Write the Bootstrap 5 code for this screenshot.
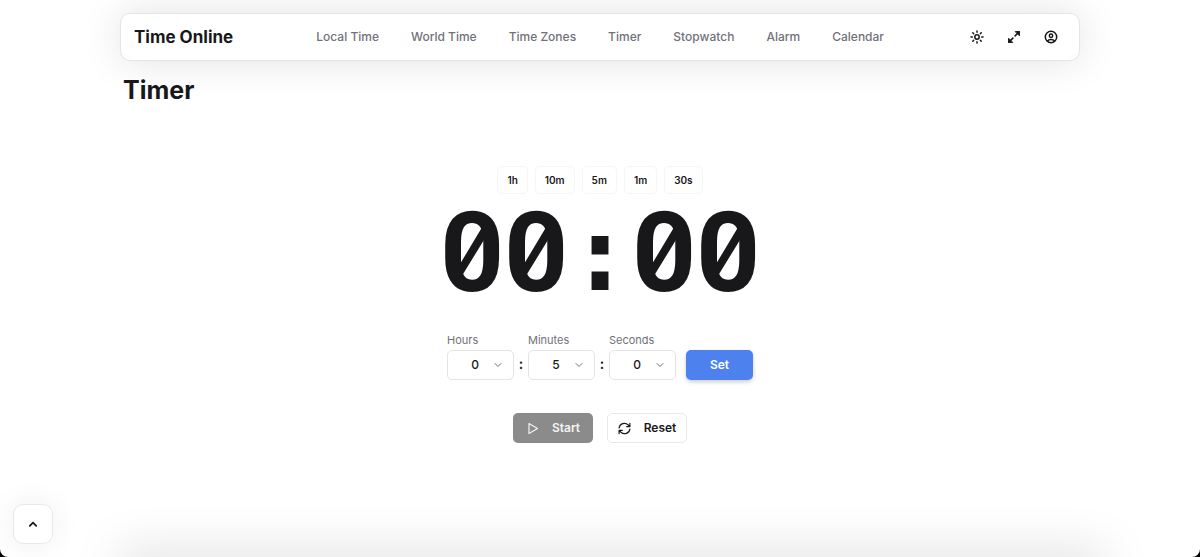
<!DOCTYPE html>
<html lang="en">
<head>
<meta charset="utf-8">
<meta name="viewport" content="width=device-width, initial-scale=1">
<title>Timer - Time Online</title>
<link href="https://cdn.jsdelivr.net/npm/bootstrap@5.3.0/dist/css/bootstrap.min.css" rel="stylesheet">
<style>
html { background: #000; }
body { font-family: Inter, "Liberation Sans", sans-serif; font-size: 12px; color: #18181a; background: #000; }
.app-window { background: #fff; border-radius: 0 0 8px 8px; overflow: hidden; padding-top: 13px; }
.app-column { width: 80%; }
.app-header { height: 48px; background: #fff; border: 1px solid #e5e5e7; border-radius: 10px; box-shadow: 0 0 40px rgba(0,0,0,.12); padding: 0 10px 0 13px; }
.brand { font-size: 17px; line-height: 24px; font-weight: 700; color: #18181a; }
.site-nav { gap: 32px; }
.site-link { font-weight: 500; color: #71717a; }
.tools { gap: 1px; }
.tool-btn { width: 36px; height: 36px; color: #18181a; }
.title { font-size: 25px; font-weight: 700; line-height: 30px; margin: 14px 3px 0; }
.presets { gap: 7px; margin-top: 61px; }
.preset { height: 28px; padding: 0 9px; font-size: 10px; font-weight: 600; line-height: 12px; background: #fff; color: #18181a; border: 1px solid #f6f6f7; border-radius: 5px; }
.clock { font: 700 112px/112px Roboto, sans-serif; color: #18181a; margin-top: 3px; }
.digit, .separator { width: 64px; text-align: center; }
.digit { position: relative; }
.digit::after { content: ""; position: absolute; left: 17px; top: 32px; width: 30px; height: 50px; background: currentColor; clip-path: polygon(0 40px, 24px 0, 30px 0, 30px 6px, 3px 50px, 0 50px); }
.separator { font: 700 104px/114px "DejaVu Sans Mono", monospace; }
.duration { gap: 4px; margin-top: 22px; }
.field-label { font-size: 11px; line-height: 14px; color: #71717a; margin-bottom: 3px; }
.duration-select { width: 67px; height: 30px; padding: 0 11px 0 0; text-align: center; text-align-last: center; font-size: 12px; font-weight: 500; color: #18181a; background: #fff; border: 1px solid #e4e4e7; border-radius: 5px; appearance: none; }
.chevron { position: absolute; right: 12px; bottom: 10px; pointer-events: none; color: #71717a; }
.colon { width: 6px; height: 30px; font-size: 14px; line-height: 28px; font-weight: 600; text-align: center; }
.action { height: 30px; padding: 0; font-size: 12px; line-height: 16px; font-weight: 600; border-radius: 5px; }
.set-btn { width: 67px; margin-left: 6px; color: #fff; background: #4d82ee; box-shadow: 0 2px 4px rgba(0,0,0,.2); }
.actions { gap: 14px; margin-top: 33px; }
.run-btn, .reset-btn { width: 80px; gap: 13px; }
.run-btn, .run-btn:disabled { color: #f4f4f4; background: #8b8b8b; border: 0; opacity: 1; }
.reset-btn { background: #fff; border: 1px solid #e8e8ea; color: #18181a; }
.top-btn { left: 13px; bottom: 13px; width: 40px; height: 40px; background: #fff; border: 1px solid #e8e8ea; border-radius: 10px; box-shadow: 0 0 30px rgba(0,0,0,.07); color: #18181a; }
.dock-shade { left: 10%; right: 8%; bottom: -20px; height: 20px; box-shadow: 0 0 50px rgba(0,0,0,.22); }
.glyph { fill: none; stroke: currentColor; stroke-linecap: round; stroke-linejoin: round; }
</style>
</head>
<body>
<div class="app-window min-vh-100 position-relative">
  <div class="app-column mx-auto">
    <header class="app-header d-flex align-items-center justify-content-between">
      <a class="brand text-decoration-none" href="#">Time Online</a>
      <nav class="site-nav d-flex ps-2" aria-label="Main">
        <a class="site-link text-decoration-none" href="#">Local Time</a>
        <a class="site-link text-decoration-none" href="#">World Time</a>
        <a class="site-link text-decoration-none" href="#">Time Zones</a>
        <a class="site-link text-decoration-none" href="#">Timer</a>
        <a class="site-link text-decoration-none" href="#">Stopwatch</a>
        <a class="site-link text-decoration-none" href="#">Alarm</a>
        <a class="site-link text-decoration-none" href="#">Calendar</a>
      </nav>
      <div class="tools d-flex">
        <button class="tool-btn btn border-0 p-0 d-flex align-items-center justify-content-center" aria-label="Theme"><svg class="glyph" width="14" height="14" viewBox="0 0 14 14" stroke-width="1.500"><circle cx="7" cy="7" r="2.200"/><path d="M7 1v1.300M7 11.700V13M1 7h1.300M11.700 7H13M2.800 2.800l.8.8M10.400 10.400l.8.8M2.800 11.200l.8-.8M10.400 3.600l.8-.8"/></svg></button>
        <button class="tool-btn btn border-0 p-0 d-flex align-items-center justify-content-center" aria-label="Full screen"><svg class="glyph" width="14" height="14" viewBox="0 0 14 14" stroke-width="1.500"><path d="M8.100 5.900l4-4M5.900 8.100l-4 4"/><path d="M8.600 1.600h3.800v3.800zM1.600 8.600v3.800h3.800z" fill="currentColor" stroke-width="1"/></svg></button>
        <button class="tool-btn btn border-0 p-0 d-flex align-items-center justify-content-center" aria-label="Account"><svg class="glyph" width="14" height="14" viewBox="0 0 14 14" stroke-width="1.500"><circle cx="7" cy="7" r="5.700"/><circle cx="7" cy="5.700" r="1.700"/><path d="M3.500 11c.8-1.200 2-1.600 3.500-1.600s2.700.4 3.500 1.600"/></svg></button>
      </div>
    </header>
    <main>
      <h1 class="title">Timer</h1>
      <div class="presets d-flex justify-content-center">
        <button class="preset btn">1h</button>
        <button class="preset btn">10m</button>
        <button class="preset btn">5m</button>
        <button class="preset btn">1m</button>
        <button class="preset btn">30s</button>
      </div>
      <div class="clock d-flex justify-content-center" role="timer"><span class="digit">0</span><span class="digit">0</span><span class="separator">:</span><span class="digit">0</span><span class="digit">0</span></div>
      <form class="duration d-flex justify-content-center align-items-end">
        <div class="position-relative d-flex flex-column">
          <label class="field-label" for="hours">Hours</label>
          <select class="duration-select" id="hours"><option>0</option></select>
          <svg class="glyph chevron" width="8" height="10" viewBox="0 0 8 10"><path d="M1 3.500l3 3 3-3"/></svg>
        </div>
        <span class="colon">:</span>
        <div class="position-relative d-flex flex-column">
          <label class="field-label" for="minutes">Minutes</label>
          <select class="duration-select" id="minutes"><option>5</option></select>
          <svg class="glyph chevron" width="8" height="10" viewBox="0 0 8 10"><path d="M1 3.500l3 3 3-3"/></svg>
        </div>
        <span class="colon">:</span>
        <div class="position-relative d-flex flex-column">
          <label class="field-label" for="seconds">Seconds</label>
          <select class="duration-select" id="seconds"><option>0</option></select>
          <svg class="glyph chevron" width="8" height="10" viewBox="0 0 8 10"><path d="M1 3.500l3 3 3-3"/></svg>
        </div>
        <button class="action set-btn btn border-0" type="button">Set</button>
      </form>
      <div class="actions d-flex justify-content-center">
        <button class="action run-btn btn d-flex align-items-center justify-content-center" disabled><svg class="glyph" width="13" height="13" viewBox="0 0 13 13" stroke-width="1.200"><path d="M3 1.500l8.500 5L3 11.500z"/></svg>Start</button>
        <button class="action reset-btn btn d-flex align-items-center justify-content-center"><svg class="glyph" width="13" height="13" viewBox="0 0 24 24" stroke-width="2.200"><path d="M22 2.500v6h-6M2 21.500v-6h6M2 11a10 10 0 0 1 16.500-6L22 8.500M2 15.500L5.500 19a10 10 0 0 0 16.500-6"/></svg>Reset</button>
      </div>
    </main>
  </div>
  <div class="dock-shade position-fixed"></div>
  <button class="top-btn btn p-0 position-fixed d-flex align-items-center justify-content-center" aria-label="Back to top"><svg class="glyph" width="10" height="10" viewBox="0 0 10 10" stroke-width="1.800"><path d="M1.800 6.800L5 3.600l3.200 3.200"/></svg></button>
</div>
<script src="https://cdn.jsdelivr.net/npm/bootstrap@5.3.0/dist/js/bootstrap.bundle.min.js"></script>
</body>
</html>
